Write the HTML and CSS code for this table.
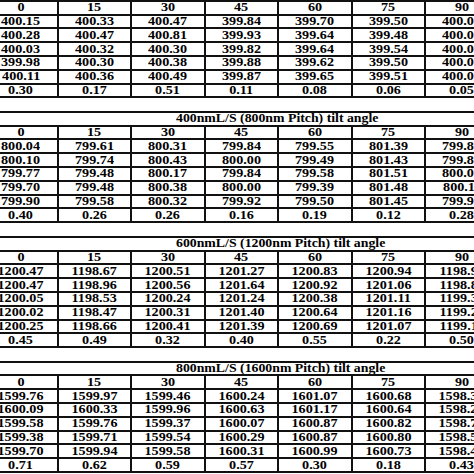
FILE: index.html
```html
<!DOCTYPE html>
<html>
<head>
<meta charset="utf-8">
<link rel="stylesheet" href="styles.css">
</head>
<body>
<div class="page">
  <table class="grid">
    <colgroup><col><col><col><col><col><col><col></colgroup>
    <tr class="title"><td colspan="7"><span>200nmL/S (400nm Pitch) tilt angle</span></td></tr>
    <tr><td><span>0</span></td><td><span>15</span></td><td><span>30</span></td><td><span>45</span></td><td><span>60</span></td><td><span>75</span></td><td><span>90</span></td></tr>
    <tr><td><span>400.15</span></td><td><span>400.33</span></td><td><span>400.47</span></td><td><span>399.84</span></td><td><span>399.70</span></td><td><span>399.50</span></td><td><span>400.04</span></td></tr>
    <tr><td><span>400.28</span></td><td><span>400.47</span></td><td><span>400.81</span></td><td><span>399.93</span></td><td><span>399.64</span></td><td><span>399.48</span></td><td><span>400.04</span></td></tr>
    <tr><td><span>400.03</span></td><td><span>400.32</span></td><td><span>400.30</span></td><td><span>399.82</span></td><td><span>399.64</span></td><td><span>399.54</span></td><td><span>400.09</span></td></tr>
    <tr><td><span>399.98</span></td><td><span>400.30</span></td><td><span>400.38</span></td><td><span>399.88</span></td><td><span>399.62</span></td><td><span>399.50</span></td><td><span>400.09</span></td></tr>
    <tr><td><span>400.11</span></td><td><span>400.36</span></td><td><span>400.49</span></td><td><span>399.87</span></td><td><span>399.65</span></td><td><span>399.51</span></td><td><span>400.07</span></td></tr>
    <tr><td><span>0.30</span></td><td><span>0.17</span></td><td><span>0.51</span></td><td><span>0.11</span></td><td><span>0.08</span></td><td><span>0.06</span></td><td><span>0.05</span></td></tr>
  </table>

  <table class="grid">
    <colgroup><col><col><col><col><col><col><col></colgroup>
    <tr class="title"><td colspan="7"><span>400nmL/S (800nm Pitch) tilt angle</span></td></tr>
    <tr><td><span>0</span></td><td><span>15</span></td><td><span>30</span></td><td><span>45</span></td><td><span>60</span></td><td><span>75</span></td><td><span>90</span></td></tr>
    <tr><td><span>800.04</span></td><td><span>799.61</span></td><td><span>800.31</span></td><td><span>799.84</span></td><td><span>799.55</span></td><td><span>801.39</span></td><td><span>799.82</span></td></tr>
    <tr><td><span>800.10</span></td><td><span>799.74</span></td><td><span>800.43</span></td><td><span>800.00</span></td><td><span>799.49</span></td><td><span>801.43</span></td><td><span>799.83</span></td></tr>
    <tr><td><span>799.77</span></td><td><span>799.48</span></td><td><span>800.17</span></td><td><span>799.84</span></td><td><span>799.58</span></td><td><span>801.51</span></td><td><span>800.03</span></td></tr>
    <tr><td><span>799.70</span></td><td><span>799.48</span></td><td><span>800.38</span></td><td><span>800.00</span></td><td><span>799.39</span></td><td><span>801.48</span></td><td><span>800.11</span></td></tr>
    <tr><td><span>799.90</span></td><td><span>799.58</span></td><td><span>800.32</span></td><td><span>799.92</span></td><td><span>799.50</span></td><td><span>801.45</span></td><td><span>799.97</span></td></tr>
    <tr><td><span>0.40</span></td><td><span>0.26</span></td><td><span>0.26</span></td><td><span>0.16</span></td><td><span>0.19</span></td><td><span>0.12</span></td><td><span>0.28</span></td></tr>
  </table>

  <table class="grid">
    <colgroup><col><col><col><col><col><col><col></colgroup>
    <tr class="title"><td colspan="7"><span>600nmL/S (1200nm Pitch) tilt angle</span></td></tr>
    <tr><td><span>0</span></td><td><span>15</span></td><td><span>30</span></td><td><span>45</span></td><td><span>60</span></td><td><span>75</span></td><td><span>90</span></td></tr>
    <tr><td><span>1200.47</span></td><td><span>1198.67</span></td><td><span>1200.51</span></td><td><span>1201.27</span></td><td><span>1200.83</span></td><td><span>1200.94</span></td><td><span>1198.94</span></td></tr>
    <tr><td><span>1200.47</span></td><td><span>1198.96</span></td><td><span>1200.56</span></td><td><span>1201.64</span></td><td><span>1200.92</span></td><td><span>1201.06</span></td><td><span>1198.85</span></td></tr>
    <tr><td><span>1200.05</span></td><td><span>1198.53</span></td><td><span>1200.24</span></td><td><span>1201.24</span></td><td><span>1200.38</span></td><td><span>1201.11</span></td><td><span>1199.32</span></td></tr>
    <tr><td><span>1200.02</span></td><td><span>1198.47</span></td><td><span>1200.31</span></td><td><span>1201.40</span></td><td><span>1200.64</span></td><td><span>1201.16</span></td><td><span>1199.25</span></td></tr>
    <tr><td><span>1200.25</span></td><td><span>1198.66</span></td><td><span>1200.41</span></td><td><span>1201.39</span></td><td><span>1200.69</span></td><td><span>1201.07</span></td><td><span>1199.11</span></td></tr>
    <tr><td><span>0.45</span></td><td><span>0.49</span></td><td><span>0.32</span></td><td><span>0.40</span></td><td><span>0.55</span></td><td><span>0.22</span></td><td><span>0.50</span></td></tr>
  </table>

  <table class="grid">
    <colgroup><col><col><col><col><col><col><col></colgroup>
    <tr class="title"><td colspan="7"><span>800nmL/S (1600nm Pitch) tilt angle</span></td></tr>
    <tr><td><span>0</span></td><td><span>15</span></td><td><span>30</span></td><td><span>45</span></td><td><span>60</span></td><td><span>75</span></td><td><span>90</span></td></tr>
    <tr><td><span>1599.76</span></td><td><span>1599.97</span></td><td><span>1599.46</span></td><td><span>1600.24</span></td><td><span>1601.07</span></td><td><span>1600.68</span></td><td><span>1598.36</span></td></tr>
    <tr><td><span>1600.09</span></td><td><span>1600.33</span></td><td><span>1599.96</span></td><td><span>1600.63</span></td><td><span>1601.17</span></td><td><span>1600.64</span></td><td><span>1598.25</span></td></tr>
    <tr><td><span>1599.58</span></td><td><span>1599.76</span></td><td><span>1599.37</span></td><td><span>1600.07</span></td><td><span>1600.87</span></td><td><span>1600.82</span></td><td><span>1598.71</span></td></tr>
    <tr><td><span>1599.38</span></td><td><span>1599.71</span></td><td><span>1599.54</span></td><td><span>1600.29</span></td><td><span>1600.87</span></td><td><span>1600.80</span></td><td><span>1598.53</span></td></tr>
    <tr><td><span>1599.70</span></td><td><span>1599.94</span></td><td><span>1599.58</span></td><td><span>1600.31</span></td><td><span>1600.99</span></td><td><span>1600.73</span></td><td><span>1598.42</span></td></tr>
    <tr><td><span>0.71</span></td><td><span>0.62</span></td><td><span>0.59</span></td><td><span>0.57</span></td><td><span>0.30</span></td><td><span>0.18</span></td><td><span>0.43</span></td></tr>
  </table>
</div>
</body>
</html>
```

FILE: styles.css
```css
html, body {
  margin: 0;
  padding: 0;
  background: #ffffff;
  overflow: hidden;
}

.page {
  display: flex;
  flex-direction: column;
  gap: 12.5px;
  width: 515px;
  margin: -14px 0 0 -17px;
}

.grid {
  border-collapse: collapse;
  table-layout: fixed;
  width: 515px;
  font: bold 12px/11px "Liberation Serif", "Times New Roman", serif;
  color: #000;
}

.grid col {
  width: 73.5px;
}

.grid tr {
  height: 13.8px;
}

.grid td {
  border: 2px solid #111;
  padding: 0;
  text-align: center;
  vertical-align: middle;
  white-space: nowrap;
  overflow: hidden;
}

.grid td span {
  display: inline-block;
  transform: scaleX(1.18);
}

.grid .title td {
  text-align: left;
  padding-left: 191px;
}

.grid .title td span {
  transform: scaleX(1.15);
  transform-origin: left center;
}
```
